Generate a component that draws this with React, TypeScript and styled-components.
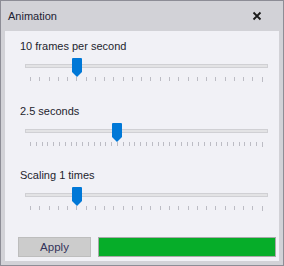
import styled, { createGlobalStyle } from "styled-components";

const GlobalStyle = createGlobalStyle`
  html, body {
    margin: 0;
    padding: 0;
    background: #ffffff;
  }
  * {
    box-sizing: border-box;
  }
`;

const Window = styled.div`
  width: 284px;
  height: 266px;
  border: 1px solid #8d8d96;
  background: #d2d2d7;
  display: flex;
  flex-direction: column;
  font-family: "Liberation Sans", Arial, sans-serif;
  font-size: 11px;
  color: #1e1e2e;
`;

const TitleBar = styled.div`
  height: 30px;
  display: flex;
  align-items: center;
  justify-content: space-between;
  padding: 0 21px 0 7px;
`;

const Title = styled.span`
  font-size: 11px;
  color: #222233;
`;

const CloseButton = styled.button`
  border: none;
  background: none;
  padding: 0;
  width: 10px;
  height: 10px;
  display: flex;
  align-items: center;
  justify-content: center;
  cursor: pointer;
`;

const Content = styled.div`
  flex: 1;
  margin: 0 4px 4px 4px;
  background: #f1f1f6;
  display: flex;
  flex-direction: column;
  padding: 9px 3px 4px 0;
`;

const SliderBlock = styled.div`
  padding: 0 8px 0 20px;
  margin-bottom: 22.5px;
`;

const Label = styled.div`
  line-height: 13px;
  height: 13px;
  margin-left: -5px;
  white-space: nowrap;
`;

const SliderArea = styled.div`
  position: relative;
  height: 19px;
  margin-top: 5px;
`;

const Track = styled.div`
  position: absolute;
  left: 0;
  right: 0;
  top: 6px;
  height: 4px;
  background: #e3e3e5;
  border: 1px solid #d0d0d4;
`;

const ThumbRange = styled.div`
  position: absolute;
  left: 0;
  right: 10px;
  top: 0;
  bottom: 0;
`;

const Thumb = styled.svg`
  position: absolute;
  top: 0;
  width: 10px;
  height: 19px;
  display: block;
`;

const Ticks = styled.div`
  display: flex;
  justify-content: space-between;
  align-items: flex-start;
  margin: 0 5px;
  height: 5px;
`;

const Tick = styled.span<{ $long?: boolean }>`
  width: 1px;
  height: ${(p) => (p.$long ? "5px" : "4px")};
  background: #bcbcc4;
`;

const Spacer = styled.div`
  flex: 1;
`;

const ButtonRow = styled.div`
  display: flex;
  gap: 7px;
  padding-left: 13px;
`;

const ApplyButton = styled.button`
  width: 73px;
  height: 20px;
  background: #cccccc;
  border: 1px solid #bdbdbd;
  font-family: "Liberation Sans", Arial, sans-serif;
  font-size: 11.5px;
  color: #33335a;
  padding: 0;
`;

const ColorBox = styled.div`
  flex: 1;
  height: 20px;
  background: #06ad29;
  border: 1px solid #a9a9a9;
`;

interface SliderProps {
  label: string;
  steps: number;
  value: number;
}

function Slider({ label, steps, value }: SliderProps) {
  const ticks = Array.from({ length: steps + 1 }, (_, i) => i);
  return (
    <SliderBlock>
      <Label>{label}</Label>
      <SliderArea>
        <Track />
        <ThumbRange>
          <Thumb
            viewBox="0 0 10 19"
            style={{ left: `${(value / steps) * 100}%` }}
          >
            <path d="M1 0 H9 Q10 0 10 1 V14 L5 19 L0 14 V1 Q0 0 1 0 Z" fill="#0078d7" />
          </Thumb>
        </ThumbRange>
      </SliderArea>
      <Ticks>
        {ticks.map((t) => (
          <Tick key={t} $long={t === steps} />
        ))}
      </Ticks>
    </SliderBlock>
  );
}

export default function App() {
  return (
    <>
      <GlobalStyle />
      <Window>
        <TitleBar>
          <Title>Animation</Title>
          <CloseButton aria-label="Close">
            <svg width="10" height="10" viewBox="0 0 10 10">
              <path d="M1.5 1.5 L8.5 8.5 M8.5 1.5 L1.5 8.5" stroke="#1a1a1a" strokeWidth="1.8" />
            </svg>
          </CloseButton>
        </TitleBar>
        <Content>
          <Slider label="10 frames per second" steps={25} value={5} />
          <Slider label="2.5 seconds" steps={40} value={15} />
          <Slider label="Scaling 1 times" steps={25} value={5} />
          <Spacer />
          <ButtonRow>
            <ApplyButton>Apply</ApplyButton>
            <ColorBox />
          </ButtonRow>
        </Content>
      </Window>
    </>
  );
}
